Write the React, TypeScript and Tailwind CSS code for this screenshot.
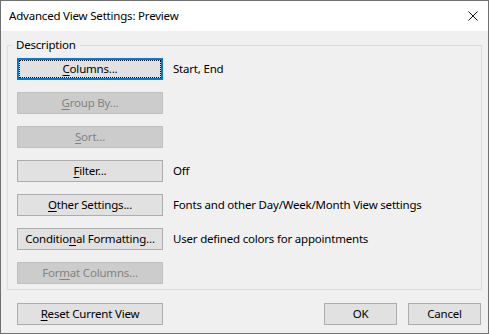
import React from 'react';

const font = { fontFamily: '"Noto Sans", "Open Sans", sans-serif' };

function Btn({
  children,
  disabled,
  focused,
  className = '',
}: {
  children: React.ReactNode;
  disabled?: boolean;
  focused?: boolean;
  className?: string;
}) {
  const look = disabled
    ? 'border border-[#bfbfbf] bg-[#cccccc] text-[#838383]'
    : focused
      ? 'border-2 border-[#0078d7] bg-[#e1e1e1] text-black'
      : 'border border-[#adadad] bg-[#e1e1e1] text-black';
  return (
    <div className={`relative flex h-[22px] shrink-0 items-center justify-center leading-none ${look} ${className}`}>
      {focused && <div className="absolute inset-0 border border-dotted border-black" />}
      <span className="relative">{children}</span>
    </div>
  );
}

// mnemonic letter
const M = ({ c }: { c: string }) => <span className="underline underline-offset-[2px]">{c}</span>;

const rows: { btn: React.ReactNode; label?: string; disabled?: boolean; focused?: boolean }[] = [
  { btn: <><M c="C" />olumns...</>, label: 'Start, End', focused: true },
  { btn: <><M c="G" />roup By...</>, disabled: true },
  { btn: <><M c="S" />ort...</>, disabled: true },
  { btn: <><M c="F" />ilter...</>, label: 'Off' },
  { btn: <><M c="O" />ther Settings...</>, label: 'Fonts and other Day/Week/Month View settings' },
  { btn: <>Conditio<M c="n" />al Formatting...</>, label: 'User defined colors for appointments' },
  { btn: <>For<M c="m" />at Columns...</>, disabled: true },
];

export default function App() {
  return (
    <div
      className="flex h-[334px] w-[489px] flex-col border border-[#707070] bg-[#f0f0f0] text-[11.5px] tracking-[-0.2px]"
      style={font}
    >
      {/* Title bar */}
      <div className="flex h-[30px] shrink-0 items-center justify-between bg-white pl-[8px] pr-[10px]">
        <span className="text-black">Advanced View Settings: Preview</span>
        <svg width="10" height="10" viewBox="0 0 10 10">
          <path d="M0.5 0.5 L9.5 9.5 M9.5 0.5 L0.5 9.5" stroke="#111" strokeWidth="1" />
        </svg>
      </div>

      {/* Description group */}
      <fieldset className="mx-[6px] mt-[6px] flex flex-col gap-[12px] border border-[#dcdcdc] pb-[5px] pl-[9px] pt-[5px]">
        <legend className="-ml-[5px] px-[4px] leading-[16px] text-black">Description</legend>
        {rows.map((r, i) => (
          <div key={i} className="flex items-center">
            <Btn disabled={r.disabled} focused={r.focused} className="w-[146px]">
              {r.btn}
            </Btn>
            {r.label && <span className="ml-[10px] text-black">{r.label}</span>}
          </div>
        ))}
      </fieldset>

      {/* Footer buttons */}
      <div className="mt-[13px] flex items-center pl-[16px] pr-[7px]">
        <Btn className="w-[146px]">
          <M c="R" />eset Current View
        </Btn>
        <div className="flex-1" />
        <Btn className="w-[73px]">OK</Btn>
        <Btn className="ml-[11px] w-[73px]">Cancel</Btn>
      </div>
    </div>
  );
}
